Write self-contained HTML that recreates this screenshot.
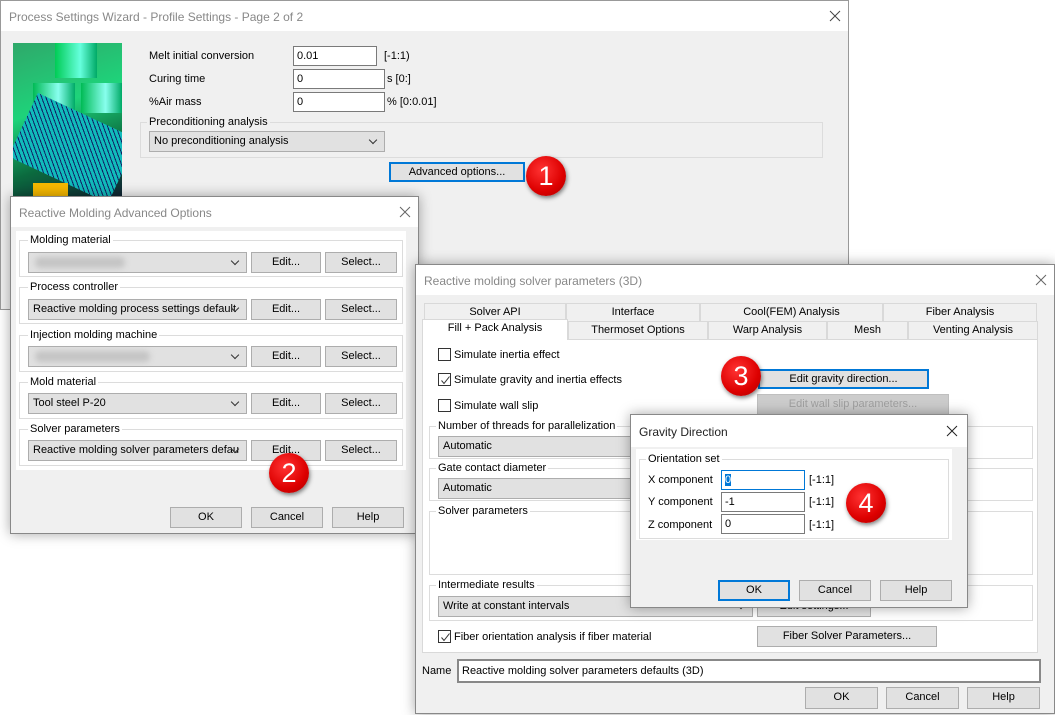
<!DOCTYPE html>
<html><head><style>
*{box-sizing:border-box;margin:0;padding:0}
body{width:1055px;height:715px;background:#fff;position:relative;overflow:hidden;font:11px "Liberation Sans",sans-serif;color:#000}
.a{position:absolute}
.win{position:absolute;background:#f0f0f0;border:1px solid #888;box-shadow:0 0 12px rgba(0,0,0,.35)}
.tb{position:absolute;left:0;right:0;top:0;height:30px;background:#fff}
.tt{position:absolute;left:8px;top:9px;font-size:12px;color:#888}
.x{position:absolute;top:9px;width:12px;height:12px}
.t{position:absolute;white-space:nowrap;line-height:14px}
.in{position:absolute;background:#fff;border:1px solid #7a7a7a;padding:2px 3px;line-height:14px;white-space:nowrap;overflow:hidden}
.sel{position:absolute;background:#e1e1e1;border:1px solid #adadad;padding:2px 18px 2px 4px;line-height:15px;white-space:nowrap;overflow:hidden}
.sel:after{content:"";position:absolute;right:8px;top:5px;width:5px;height:5px;border-right:1px solid #333;border-bottom:1px solid #333;transform:rotate(45deg)}
.btn{position:absolute;background:#e1e1e1;border:1px solid #adadad;text-align:center;line-height:18px;white-space:nowrap}
.blue{border:2px solid #0078d7;line-height:16px}
.dis{color:#a0a0a0;background:#ccc;border-color:#bfbfbf}
.grp{position:absolute;border:1px solid #dcdcdc}
.gl{position:absolute;top:-8px;left:8px;padding:0 2px;line-height:14px;white-space:nowrap}
.badge{position:absolute;width:40px;height:40px;border-radius:50%;background:radial-gradient(circle at 40% 35%,#f33,#d00 60%,#a00);color:#fff;font-size:27px;text-align:center;line-height:40px;box-shadow:1px 2px 4px rgba(0,0,0,.5)}
.cb{position:absolute;width:13px;height:13px;border:1px solid #333;background:#fff}
.cb svg{position:absolute;left:1px;top:1px}
.tab{position:absolute;background:#f0f0f0;border:1px solid #d9d9d9;text-align:center;line-height:17px;white-space:nowrap}
.blur{position:absolute;height:11px;background:#c4c4c4;filter:blur(3px);border-radius:5px}
</style></head><body>

<!-- Window 1 -->
<div class="win" style="left:0;top:0;width:849px;height:310px;box-shadow:none;border-color:#999">
<div class="tb"><div class="tt">Process Settings Wizard - Profile Settings - Page 2 of 2</div><svg class="x" style="left:828px" viewBox="0 0 12 12"><path d="M1 1L11 11M11 1L1 11" stroke="#444" stroke-width="1"/></svg></div>
<div class="a" style="left:12px;top:42px;width:109px;height:155px;background:linear-gradient(160deg,#2fa86a,#1ed37a 40%,#0b6b3f 70%,#123);overflow:hidden">
 <div class="a" style="left:42px;top:0;width:42px;height:35px;background:linear-gradient(90deg,#0c5,#6fd 60%,#0a6)"></div>
 <div class="a" style="left:20px;top:40px;width:42px;height:30px;background:linear-gradient(90deg,#0b5,#8fe 60%,#0a6)"></div>
 <div class="a" style="left:68px;top:40px;width:41px;height:30px;background:linear-gradient(90deg,#0b5,#8fe 60%,#0a6)"></div>
 <div class="a" style="width:110px;height:70px;background:repeating-linear-gradient(45deg,#1bb 0 3px,#126 3px 4px),#1aa;transform:rotate(25deg);top:70px;left:5px"></div>
 <div class="a" style="left:20px;top:140px;width:35px;height:20px;background:#f5b800"></div>
</div>
<div class="t" style="left:148px;top:48px">Melt initial conversion</div>
<div class="in" style="left:292px;top:45px;width:84px;height:20px">0.01</div>
<div class="t" style="left:383px;top:48px">[-1:1)</div>
<div class="t" style="left:148px;top:71px">Curing time</div>
<div class="in" style="left:292px;top:68px;width:92px;height:20px">0</div>
<div class="t" style="left:386px;top:71px">s [0:]</div>
<div class="t" style="left:148px;top:94px">%Air mass</div>
<div class="in" style="left:292px;top:91px;width:92px;height:20px">0</div>
<div class="t" style="left:386px;top:94px">% [0:0.01]</div>
<div class="grp" style="left:139px;top:121px;width:683px;height:36px"><div class="gl" style="background:#f0f0f0;left:6px">Preconditioning analysis</div></div>
<div class="sel" style="left:148px;top:130px;width:236px;height:21px">No preconditioning analysis</div>
<div class="btn blue" style="left:388px;top:161px;width:136px;height:20px">Advanced options...</div>
</div>
<div class="badge" style="left:526px;top:156px">1</div>

<!-- Window 2 -->
<div class="win" style="left:10px;top:196px;width:409px;height:338px">
<div class="tb"><div class="tt">Reactive Molding Advanced Options</div><svg class="x" style="left:388px" viewBox="0 0 12 12"><path d="M1 1L11 11M11 1L1 11" stroke="#666" stroke-width="1"/></svg></div>
<div class="a" style="left:5px;top:34px;width:390px;height:239px;background:#fff"></div>
<div class="grp" style="left:8px;top:43px;width:384px;height:37px"><div class="gl" style="background:#fff">Molding material</div></div>
<div class="grp" style="left:8px;top:90px;width:384px;height:37px"><div class="gl" style="background:#fff">Process controller</div></div>
<div class="grp" style="left:8px;top:138px;width:384px;height:37px"><div class="gl" style="background:#fff">Injection molding machine</div></div>
<div class="grp" style="left:8px;top:185px;width:384px;height:37px"><div class="gl" style="background:#fff">Mold material</div></div>
<div class="grp" style="left:8px;top:232px;width:384px;height:37px"><div class="gl" style="background:#fff">Solver parameters</div></div>
<div class="sel" style="left:17px;top:55px;width:219px;height:21px"></div><div class="blur" style="left:24px;top:60px;width:90px"></div>
<div class="sel" style="left:17px;top:102px;width:219px;height:21px">Reactive molding process settings default</div>
<div class="sel" style="left:17px;top:149px;width:219px;height:21px"></div><div class="blur" style="left:24px;top:154px;width:115px"></div>
<div class="sel" style="left:17px;top:196px;width:219px;height:21px">Tool steel P-20</div>
<div class="sel" style="left:17px;top:243px;width:219px;height:21px">Reactive molding solver parameters defau</div>
<div class="btn" style="left:240px;top:55px;width:70px;height:21px">Edit...</div><div class="btn" style="left:314px;top:55px;width:72px;height:21px">Select...</div>
<div class="btn" style="left:240px;top:102px;width:70px;height:21px">Edit...</div><div class="btn" style="left:314px;top:102px;width:72px;height:21px">Select...</div>
<div class="btn" style="left:240px;top:149px;width:70px;height:21px">Edit...</div><div class="btn" style="left:314px;top:149px;width:72px;height:21px">Select...</div>
<div class="btn" style="left:240px;top:196px;width:70px;height:21px">Edit...</div><div class="btn" style="left:314px;top:196px;width:72px;height:21px">Select...</div>
<div class="btn" style="left:240px;top:243px;width:70px;height:21px">Edit...</div><div class="btn" style="left:314px;top:243px;width:72px;height:21px">Select...</div>
<div class="btn" style="left:159px;top:310px;width:72px;height:21px">OK</div>
<div class="btn" style="left:240px;top:310px;width:72px;height:21px">Cancel</div>
<div class="btn" style="left:321px;top:310px;width:72px;height:21px">Help</div>
</div>
<div class="badge" style="left:269px;top:453px">2</div>

<!-- Window 3 -->
<div class="win" style="left:415px;top:264px;width:640px;height:450px">
<div class="tb"><div class="tt">Reactive molding solver parameters (3D)</div><svg class="x" style="left:619px" viewBox="0 0 12 12"><path d="M1 1L11 11M11 1L1 11" stroke="#666" stroke-width="1"/></svg></div>
<div class="tab" style="left:8px;top:38px;width:142px;height:19px">Solver API</div>
<div class="tab" style="left:150px;top:38px;width:134px;height:19px">Interface</div>
<div class="tab" style="left:284px;top:38px;width:183px;height:19px">Cool(FEM) Analysis</div>
<div class="tab" style="left:467px;top:38px;width:154px;height:19px">Fiber Analysis</div>
<div class="a" style="left:6px;top:74px;width:616px;height:314px;background:#fff;border:1px solid #d9d9d9"></div>
<div class="tab" style="left:6px;top:54px;width:146px;height:21px;background:#fff;border-bottom:none">Fill + Pack Analysis</div>
<div class="tab" style="left:152px;top:56px;width:140px;height:19px">Thermoset Options</div>
<div class="tab" style="left:292px;top:56px;width:119px;height:19px">Warp Analysis</div>
<div class="tab" style="left:411px;top:56px;width:81px;height:19px">Mesh</div>
<div class="tab" style="left:492px;top:56px;width:130px;height:19px">Venting Analysis</div>
<div class="cb" style="left:22px;top:83px"></div><div class="t" style="left:38px;top:83px">Simulate inertia effect</div>
<div class="cb" style="left:22px;top:108px"><svg width="11" height="11" viewBox="0 0 11 11"><path d="M1.5 5.5L4 8.5L9.5 1.5" fill="none" stroke="#333" stroke-width="1"/></svg></div><div class="t" style="left:38px;top:108px">Simulate gravity and inertia effects</div>
<div class="cb" style="left:22px;top:134px"></div><div class="t" style="left:38px;top:134px">Simulate wall slip</div>
<div class="btn blue" style="left:342px;top:104px;width:171px;height:20px">Edit gravity direction...</div>
<div class="btn dis" style="left:341px;top:129px;width:192px;height:21px">Edit wall slip parameters...</div>
<div class="grp" style="left:13px;top:161px;width:604px;height:33px"><div class="gl" style="background:#fff;left:6px">Number of threads for parallelization</div></div>
<div class="sel" style="left:22px;top:171px;width:315px;height:21px">Automatic</div>
<div class="grp" style="left:13px;top:203px;width:604px;height:33px"><div class="gl" style="background:#fff;left:6px">Gate contact diameter</div></div>
<div class="sel" style="left:22px;top:213px;width:315px;height:21px">Automatic</div>
<div class="grp" style="left:13px;top:246px;width:604px;height:64px"><div class="gl" style="background:#fff;left:6px">Solver parameters</div></div>
<div class="grp" style="left:13px;top:320px;width:604px;height:36px"><div class="gl" style="background:#fff;left:6px">Intermediate results</div></div>
<div class="sel" style="left:22px;top:331px;width:315px;height:21px">Write at constant intervals</div>
<div class="btn" style="left:341px;top:331px;width:114px;height:21px">Edit settings...</div>
<div class="cb" style="left:22px;top:365px"><svg width="11" height="11" viewBox="0 0 11 11"><path d="M1.5 5.5L4 8.5L9.5 1.5" fill="none" stroke="#333" stroke-width="1"/></svg></div><div class="t" style="left:38px;top:365px">Fiber orientation analysis if fiber material</div>
<div class="btn" style="left:341px;top:361px;width:180px;height:21px">Fiber Solver Parameters...</div>
<div class="t" style="left:6px;top:399px">Name</div>
<div class="in" style="left:41px;top:394px;width:584px;height:24px;border:2px solid #888;padding:3px 3px">Reactive molding solver parameters defaults (3D)</div>
<div class="btn" style="left:389px;top:422px;width:73px;height:22px">OK</div>
<div class="btn" style="left:470px;top:422px;width:73px;height:22px">Cancel</div>
<div class="btn" style="left:551px;top:422px;width:73px;height:22px">Help</div>
</div>
<div class="badge" style="left:721px;top:356px">3</div>

<!-- Gravity dialog -->
<div class="win" style="left:630px;top:414px;width:338px;height:194px">
<div class="tb" style="height:32px"><div class="tt" style="color:#222;top:10px">Gravity Direction</div><svg class="x" style="left:315px;top:10px" viewBox="0 0 12 12"><path d="M1 1L11 11M11 1L1 11" stroke="#222" stroke-width="1"/></svg></div>
<div class="a" style="left:5px;top:34px;width:316px;height:91px;background:#fff"></div>
<div class="grp" style="left:8px;top:44px;width:310px;height:80px"><div class="gl" style="background:#fff;left:6px">Orientation set</div></div>
<div class="t" style="left:17px;top:58px">X component</div>
<div class="in" style="left:90px;top:55px;width:84px;height:20px;border-color:#0078d7"><span style="background:#0078d7;color:#fff">0</span></div>
<div class="t" style="left:178px;top:58px">[-1:1]</div>
<div class="t" style="left:17px;top:80px">Y component</div>
<div class="in" style="left:90px;top:77px;width:84px;height:20px">-1</div>
<div class="t" style="left:178px;top:80px">[-1:1]</div>
<div class="t" style="left:17px;top:103px">Z component</div>
<div class="in" style="left:90px;top:99px;width:84px;height:20px">0</div>
<div class="t" style="left:178px;top:103px">[-1:1]</div>
<div class="btn blue" style="left:87px;top:165px;width:72px;height:21px">OK</div>
<div class="btn" style="left:168px;top:165px;width:72px;height:21px">Cancel</div>
<div class="btn" style="left:249px;top:165px;width:72px;height:21px">Help</div>
</div>
<div class="badge" style="left:846px;top:483px">4</div>
</body></html>
